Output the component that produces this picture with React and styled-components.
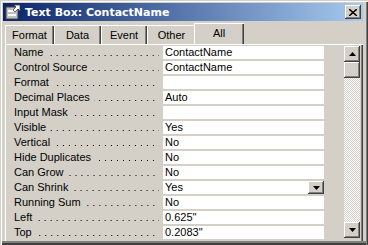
import React from "react";
import styled, { createGlobalStyle, css } from "styled-components";

const Global = createGlobalStyle`
  html, body {
    margin: 0;
    padding: 0;
    background: #d4d0c8;
  }
  body {
    font-family: "Liberation Sans", Arial, sans-serif;
    font-size: 11px;
    color: #000;
  }
`;

const raised = css`
  background: #d4d0c8;
  box-shadow: inset -1px -1px #404040, inset 1px 1px #ffffff,
    inset -2px -2px #808080, inset 2px 2px #d4d0c8;
`;

const Window = styled.div`
  width: 368px;
  height: 245px;
  box-sizing: border-box;
  padding: 3px 5px 4px 3px;
  display: flex;
  flex-direction: column;
  background: #d4d0c8;
  box-shadow: inset 1px 1px #d4d0c8, inset 2px 2px #ffffff,
    inset -1px 0 #404040, inset -2px 0 #808080,
    inset 0 -2px #404040, inset 0 -4px #808080;
  overflow: hidden;
`;

const TitleBar = styled.div`
  height: 18px;
  display: flex;
  align-items: center;
  gap: 4px;
  padding: 0 2px;
  background: linear-gradient(to right, #0a246a, #a6caf0);
  color: #fff;
  font-family: "DejaVu Sans", Verdana, sans-serif;
  font-weight: bold;
  font-size: 11px;
`;

const TitleText = styled.span`
  flex: 1;
  white-space: nowrap;
`;

const CloseButton = styled.div`
  ${raised};
  width: 16px;
  height: 14px;
  display: flex;
  align-items: center;
  justify-content: center;
`;

const TabStrip = styled.div`
  display: flex;
  align-items: flex-end;
  height: 22px;
  padding-left: 2px;
  margin-top: 1px;
`;

const Tab = styled.div`
  width: ${(p) => p.$w}px;
  height: ${(p) => (p.$active ? 21 : 19)}px;
  box-sizing: border-box;
  display: flex;
  align-items: center;
  justify-content: center;
  font-size: 11px;
  background: #d4d0c8;
  box-shadow: inset 1px 1px #ffffff, inset -1px 0 #404040, inset -2px 0 #808080;
  position: relative;
  ${(p) =>
    p.$active &&
    css`
      margin: 0 -2px;
      z-index: 1;
      padding-bottom: 1px;
    `}
`;

const Panel = styled.div`
  flex: 1;
  margin-left: 2px;
  display: flex;
  padding: 2px 2px 0 9px;
  box-shadow: inset 1px 1px #ffffff, inset -1px 0 #404040, inset -2px 0 #808080;
`;

const List = styled.div`
  display: flex;
  flex-direction: column;
  width: 310px;
`;

const Row = styled.div`
  display: flex;
  height: 15px;
`;

const Label = styled.div`
  width: 149px;
  display: flex;
  height: 13px;
  line-height: 13px;
  white-space: nowrap;
`;

/* dot leaders, drawn as a repeating background so they end flush right */
const Dots = styled.span`
  flex: 1;
  margin: 0 4px 0 4px;
  background-image: linear-gradient(to right, #000 1px, transparent 1px);
  background-size: 6px 1px;
  background-repeat: repeat-x;
  background-position: right 0 bottom 3px;
`;

const Value = styled.div`
  width: 161px;
  height: 13px;
  line-height: 13px;
  background: #fff;
  padding-left: 2px;
  box-sizing: border-box;
  display: flex;
  justify-content: space-between;
  white-space: nowrap;
`;

const DropButton = styled.div`
  ${raised};
  width: 16px;
  height: 13px;
  display: flex;
  align-items: center;
  justify-content: center;
`;

const ScrollBar = styled.div`
  margin-left: 20px;
  width: 16px;
  height: 192px;
  display: flex;
  flex-direction: column;
  background: repeating-conic-gradient(#ffffff 0 25%, #d4d0c8 0 50%) 0 0 / 2px 2px;
`;

const ScrollButton = styled.div`
  ${raised};
  width: 16px;
  height: 16px;
  display: flex;
  align-items: center;
  justify-content: center;
  flex-shrink: 0;
`;

const Track = styled.div`
  flex: 1;
`;

const Arrow = ({ up }) => (
  <svg width="7" height="4" viewBox="0 0 7 4">
    <path d={up ? "M3.5 0 L7 4 L0 4 Z" : "M0 0 L7 0 L3.5 4 Z"} fill="#000" />
  </svg>
);

const FormIcon = () => (
  <svg width="16" height="16" viewBox="0 0 16 16">
    <rect x="1" y="3" width="12" height="12" fill="#c0c0c0" stroke="#404040" strokeWidth="1" />
    <rect x="3" y="6" width="8" height="2" fill="#fff" />
    <rect x="3" y="10" width="8" height="2" fill="#fff" />
    <path d="M9 1 L15 1 L15 7 L13 5 L10 8 L8 6 L11 3 Z" fill="#ffffff" stroke="#404040" strokeWidth="0.8" />
  </svg>
);

const CloseGlyph = () => (
  <svg width="8" height="7" viewBox="0 0 8 7">
    <path d="M0 0 L8 7 M8 0 L0 7" stroke="#000" strokeWidth="1.6" />
  </svg>
);

const tabs = [
  { name: "Format", w: 49 },
  { name: "Data", w: 47 },
  { name: "Event", w: 46 },
  { name: "Other", w: 49 },
  { name: "All", w: 50, active: true },
];

const props = [
  ["Name", "ContactName"],
  ["Control Source", "ContactName"],
  ["Format", ""],
  ["Decimal Places", "Auto"],
  ["Input Mask", ""],
  ["Visible", "Yes"],
  ["Vertical", "No"],
  ["Hide Duplicates", "No"],
  ["Can Grow", "No"],
  ["Can Shrink", "Yes", true],
  ["Running Sum", "No"],
  ["Left", "0.625\""],
  ["Top", "0.2083\""],
];

export default function App() {
  return (
    <>
      <Global />
      <Window>
        <TitleBar>
          <FormIcon />
          <TitleText>Text Box: ContactName</TitleText>
          <CloseButton>
            <CloseGlyph />
          </CloseButton>
        </TitleBar>
        <TabStrip>
          {tabs.map((t) => (
            <Tab key={t.name} $w={t.w} $active={t.active}>
              {t.name}
            </Tab>
          ))}
        </TabStrip>
        <Panel>
          <List>
            {props.map(([label, value, drop]) => (
              <Row key={label}>
                <Label>
                  {label}
                  <Dots />
                </Label>
                <Value>
                  {value}
                  {drop && (
                    <DropButton>
                      <Arrow />
                    </DropButton>
                  )}
                </Value>
              </Row>
            ))}
          </List>
          <ScrollBar>
            <ScrollButton>
              <Arrow up />
            </ScrollButton>
            <ScrollButton />
            <Track />
            <ScrollButton>
              <Arrow />
            </ScrollButton>
          </ScrollBar>
        </Panel>
      </Window>
    </>
  );
}
